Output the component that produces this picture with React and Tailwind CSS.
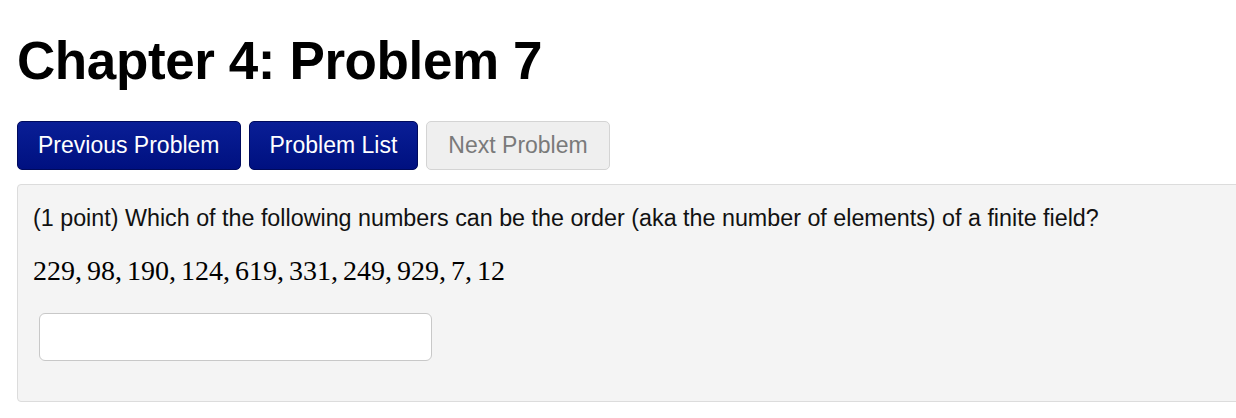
export default function App() {
  return (
    <div className="min-h-[418px] bg-white pl-[17px] pt-[26px] font-['Liberation_Sans',Arial,sans-serif] overflow-hidden">
      <h1 className="text-[53px] font-bold leading-[70px] text-black tracking-[-0.4px]">Chapter 4: Problem 7</h1>
      <div className="mt-[25px] flex gap-2">
        <button className="h-[49px] px-[20px] rounded-[5px] border border-[#000a5c] bg-gradient-to-b from-[#0a1e96] to-[#001080] text-white text-[23px]">
          Previous Problem
        </button>
        <button className="h-[49px] px-[20px] rounded-[5px] border border-[#000a5c] bg-gradient-to-b from-[#0a1e96] to-[#001080] text-white text-[23px]">
          Problem List
        </button>
        <button className="h-[49px] px-[21px] rounded-[5px] border border-[#d4d4d4] bg-[#efefef] text-[#7a7a7a] text-[23px]">
          Next Problem
        </button>
      </div>
      <div className="mt-[14px] w-[1240px] h-[218px] bg-[#f4f4f4] border border-[#dcdcdc] rounded-l-[4px] pl-[15px] pt-[20px]">
        <p className="text-[23.3px] leading-[26px] text-[#111]">
          (1 point) Which of the following numbers can be the order (aka the number of elements) of a finite field?
        </p>
        <p className="mt-[25px] text-[28px] leading-[30px] text-black font-['Liberation_Serif','Times_New_Roman',serif] [word-spacing:-2px]">
          229, 98, 190, 124, 619, 331, 249, 929, 7, 12
        </p>
        <input
          type="text"
          className="mt-[27px] ml-[6px] block w-[393px] h-[48px] bg-white border border-[#c8c8c8] rounded-[6px]"
        />
      </div>
    </div>
  );
}
